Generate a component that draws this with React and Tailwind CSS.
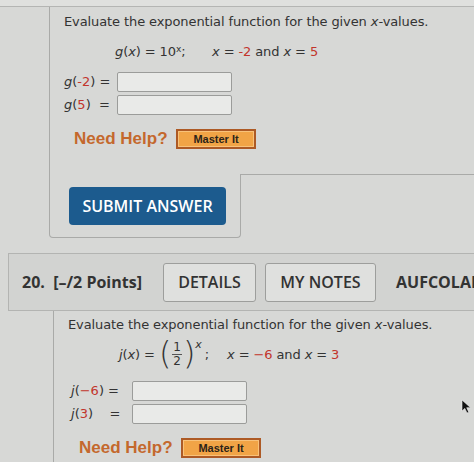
import React from 'react';

const body = { fontFamily: '"DejaVu Sans", Verdana, sans-serif' };
const arial = { fontFamily: '"Liberation Sans", Arial, sans-serif' };
const open = { fontFamily: '"Open Sans", "Liberation Sans", sans-serif' };

const Red = ({ children }) => <span className="text-[#c2352c]">{children}</span>;

// answer input
const AnswerBox = () => (
  <div className="w-[115px] h-[20px] bg-[#e9eae8] border border-[#9b9c9a] rounded-[2px]" />
);

const HelpRow = () => (
  <div className="flex items-center h-[20px]">
    <span className="text-[17px] font-bold text-[#c4682d] w-[102px] ml-[10px]" style={arial}>
      Need Help?
    </span>
    <button
      type="button"
      className="w-[80px] h-[20px] flex items-center justify-center bg-[#f1a446] border-2 border-[#ad5a25] shadow-[inset_0_0_0_1px_#f8c27a] text-[11px] font-bold text-[#2b2318]"
      style={arial}
    >
      Master It
    </button>
  </div>
);

const Cursor = () => (
  <svg width="11" height="15" viewBox="0 0 11 15" className="absolute left-[461px] top-[399px]">
    <path d="M1 1 L1 12 L3.8 9.4 L6 14 L7.8 13.2 L5.7 8.7 L9.6 8.7 Z" fill="#111" stroke="#f2f2f2" strokeWidth="0.6" />
  </svg>
);

export default function App() {
  return (
    <div className="relative w-[474px] h-[462px] overflow-hidden bg-[#d7d8d6] text-[#333]" style={body}>
      {/* strip above the first question */}
      <div className="h-[7px] bg-[#dfe0de] border-b border-[#b4b5b3]" />

      {/* question 19 panel */}
      <div className="ml-[49px]">
        <div className="border-l border-[#a9aaa8] pl-[14px] pt-[7px] pb-[25px]">
          <p className="text-[13px] leading-[16px] tracking-[-0.1px]">
            Evaluate the exponential function for the given <i>x</i>-values.
          </p>
          <div className="mt-[14px] ml-[51px] flex text-[13px] leading-[16px] tracking-[-0.1px]">
            <span className="w-[97px]">
              <i>g</i>(<i>x</i>) = 10<sup className="text-[9px]">x</sup>;
            </span>
            <span>
              <i>x</i> = <Red>-2</Red> and <i>x</i> = <Red>5</Red>
            </span>
          </div>
          <div className="mt-[12px] flex flex-col gap-[3px] text-[13px]">
            <div className="flex items-center">
              <span className="w-[53px]">
                <i>g</i>(<Red>-2</Red>) =
              </span>
              <AnswerBox />
            </div>
            <div className="flex items-center">
              <span className="w-[53px]">
                <i>g</i>(<Red>5</Red>)&nbsp;&nbsp;=
              </span>
              <AnswerBox />
            </div>
          </div>
          <div className="mt-[14px]">
            <HelpRow />
          </div>
        </div>
        <div className="flex">
          <div className="w-[192px] border-l border-b border-r border-[#a9aaa8] rounded-b-[4px] pl-[19px] pt-[13px] pb-[12px]">
            <button
              type="button"
              className="w-[157px] h-[38px] rounded-[4px] bg-[#1c5b8e] text-white text-[16px] font-semibold"
              style={open}
            >
              SUBMIT ANSWER
            </button>
          </div>
          <div className="flex-1 border-t border-[#a9aaa8]" />
        </div>
      </div>

      {/* question 20 header */}
      <div
        className="mt-[15px] ml-[8px] h-[58px] flex items-center overflow-hidden bg-[#d2d3d1] border-t border-l border-b border-[#b3b4b2] text-[#333]"
        style={open}
      >
        <span className="shrink-0 ml-[13px] w-[141px] text-[16px] font-bold whitespace-pre">20.  [–/2 Points]</span>
        <button
          type="button"
          className="shrink-0 w-[93px] h-[39px] border-[1.5px] border-[#9d9e9c] rounded-[3px] bg-[#dfe0de] text-[16px] font-semibold"
        >
          DETAILS
        </button>
        <button
          type="button"
          className="shrink-0 ml-[9px] w-[111px] h-[39px] border-[1.5px] border-[#9d9e9c] rounded-[3px] bg-[#dfe0de] text-[16px] font-semibold whitespace-nowrap"
        >
          MY NOTES
        </button>
        <span className="shrink-0 ml-[20px] text-[16px] font-bold whitespace-nowrap">AUFCOLALG8 6.1.009.</span>
      </div>

      {/* question 20 panel */}
      <div className="ml-[53px] border-l border-[#a9aaa8] pl-[14px] pt-[6px] pb-[20px]">
        <p className="text-[13px] leading-[16px] tracking-[-0.1px]">
          Evaluate the exponential function for the given <i>x</i>-values.
        </p>
        <div className="mt-[7px] ml-[51px] flex items-center text-[13px] tracking-[-0.1px]">
          <span className="flex items-center w-[108px]">
            <i>j</i>(<i>x</i>)&nbsp;=&nbsp;
            <span className="text-[32px] font-extralight leading-none -mt-[3px]">(</span>
            <span className="flex flex-col items-center text-[12px] leading-[13px] mx-[1px]">
              <span>1</span>
              <span className="border-t border-[#555] px-[1px]">2</span>
            </span>
            <span className="text-[32px] font-extralight leading-none -mt-[3px]">)</span>
            <i className="self-start text-[11px] -mt-[3px]">x</i>
            <span className="ml-[3px]">;</span>
          </span>
          <span>
            <i>x</i> = <Red>−6</Red> and <i>x</i> = <Red>3</Red>
          </span>
        </div>
        <div className="mt-[12px] flex flex-col gap-[3px] text-[13px]">
          <div className="flex items-center">
            <span className="w-[61px] ml-[3px]">
              <i>j</i>(<Red>−6</Red>)&nbsp;=
            </span>
            <AnswerBox />
          </div>
          <div className="flex items-center">
            <span className="w-[61px] ml-[3px]">
              <i>j</i>(<Red>3</Red>)&nbsp;&nbsp;&nbsp;&nbsp;=
            </span>
            <AnswerBox />
          </div>
        </div>
        <div className="mt-[14px] ml-[1px]">
          <HelpRow />
        </div>
      </div>

      <Cursor />
    </div>
  );
}
